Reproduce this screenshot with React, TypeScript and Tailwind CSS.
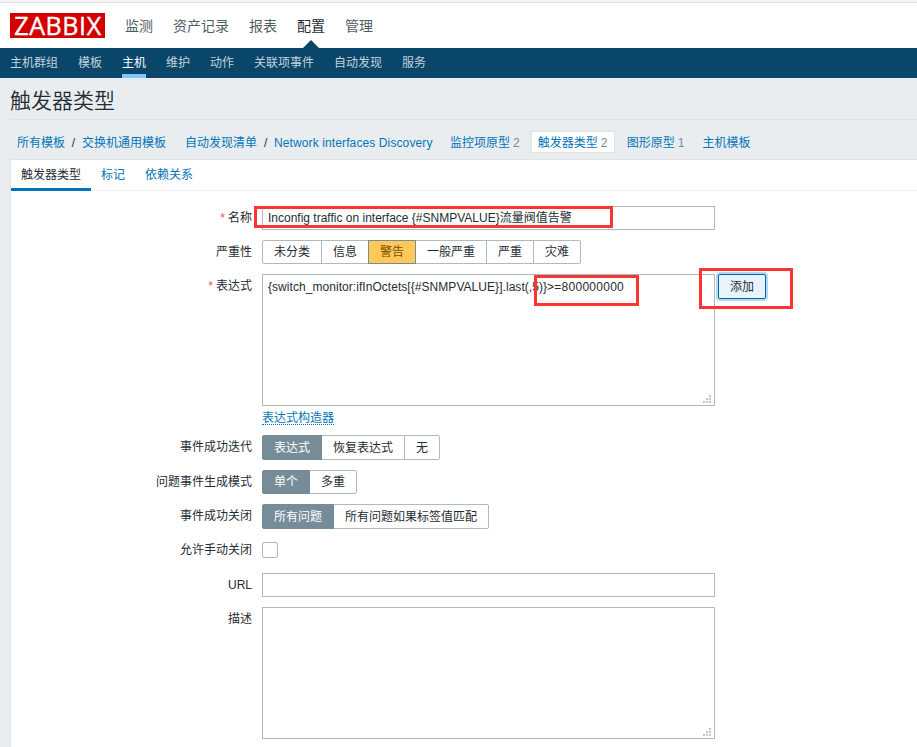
import React, { useState } from 'react';
import { clsx } from 'clsx';

const mainMenu = ['监测', '资产记录', '报表', '配置', '管理'];
const subMenu = ['主机群组', '模板', '主机', '维护', '动作', '关联项事件', '自动发现', '服务'];
const severities = ['未分类', '信息', '警告', '一般严重', '严重', '灾难'];

const FIELD = 'w-[453px] border border-[#acbbc2] bg-white';
const LINK = 'text-[#0275b8]';

function Segmented({
  items,
  initial,
  warn = false,
  tall = false,
}: {
  items: string[];
  initial: number;
  warn?: boolean;
  tall?: boolean;
}) {
  const [active, setActive] = useState(initial);

  return (
    <div className={clsx('flex', tall ? 'h-[25px]' : 'h-6')}>
      {items.map((item, i) => (
        <button
          key={item}
          type="button"
          onClick={() => setActive(i)}
          className={clsx(
            'border px-[11px] leading-[22px]',
            i > 0 && '-ml-px',
            i === 0 && 'rounded-l-[2px]',
            i === items.length - 1 && 'rounded-r-[2px]',
            i !== active && 'border-[#acbbc2] bg-white',
            i === active && 'z-10 border-[#768d99]',
            i === active && (warn ? 'bg-[#ffc859] text-[#734d00]' : 'bg-[#768d99] text-white'),
          )}
        >
          {item}
        </button>
      ))}
    </div>
  );
}

function Row({
  label,
  required = false,
  className,
  children,
}: {
  label: string;
  required?: boolean;
  className?: string;
  children: React.ReactNode;
}) {
  return (
    <div className={clsx('flex items-start', className)}>
      <label className="mr-[10px] w-[241px] shrink-0 text-right leading-6">
        {required && <span className="mr-[3px] text-[#e45959]">*</span>}
        {label}
      </label>
      {children}
    </div>
  );
}

function Grip() {
  return (
    <svg
      className="absolute right-[3px] bottom-[2px]"
      width="8"
      height="8"
      fill="#c4c4c4"
      shapeRendering="crispEdges"
    >
      <path d="M6 0h2v2h-2zM3 3h2v2h-2zM6 3h2v2h-2zM0 6h2v2h-2zM3 6h2v2h-2zM6 6h2v2h-2z" />
    </svg>
  );
}

function Count({ value }: { value: number }) {
  return <span className="ml-[3px] text-[#768d99]">{value}</span>;
}

export default function App() {
  return (
    <div className="flex h-[747px] w-[917px] flex-col overflow-hidden bg-[#e9edf0] font-['Liberation_Sans','Noto_Sans_CJK_SC',sans-serif] text-[12px] leading-[18px] text-[#1f2c33]">
      {/* Header */}
      <header className="flex h-12 shrink-0 items-start border-t-2 border-[#f7f7f7] bg-white">
        <div className="flex h-full w-full items-start border-t border-[#dfdfdf] pl-[10px]">
          <div className="mt-[10px] flex h-[25px] w-[95px] items-center justify-center bg-[#d40000] pl-px font-['Open_Sans',sans-serif] text-[25px] leading-[25px] font-medium tracking-[0.6px] text-white [-webkit-text-stroke:0.4px_white]">
            ZABBIX
          </div>
          <nav className="ml-5 flex h-full gap-5 text-[14px] leading-[20px]">
            {mainMenu.map((item) => (
              <a
                key={item}
                className={clsx(
                  'relative h-full pt-[13px]',
                  item === '配置' ? 'text-[#1f2c33]' : 'text-[#4f5d65]',
                )}
              >
                {item}
                {item === '配置' && (
                  <svg className="absolute bottom-0 left-[6px]" width="16" height="8" fill="#0a466a">
                    <path d="M0 8L8 0L16 8Z" />
                  </svg>
                )}
              </a>
            ))}
          </nav>
        </div>
      </header>

      <nav className="flex h-[30px] shrink-0 gap-5 bg-[#0a466a] pl-[10px] leading-[30px] text-[#c3d2dc]">
        {subMenu.map((item) => (
          <a
            key={item}
            className={clsx('h-full', item === '主机' && 'border-b-4 border-[#7ec8f9] text-white')}
          >
            {item}
          </a>
        ))}
      </nav>

      {/* Title and breadcrumbs */}
      <div className="ml-[10px] h-[42px] shrink-0 border-b border-[#dfe4e7]">
        <h1 className="pt-[7px] text-[21px] leading-8 font-[350]">触发器类型</h1>
      </div>

      <div className="flex h-[39px] shrink-0 items-start pt-3 pl-[17px] leading-[22px]">
        <a className={LINK}>所有模板</a>
        <span className="w-[17px] text-center">/</span>
        <a className={LINK}>交换机通用模板</a>
        <a className={clsx(LINK, 'ml-[19px]')}>自动发现清单</a>
        <span className="w-[17px] text-center">/</span>
        <a className={clsx(LINK, 'w-[159px] tracking-[0.11px] whitespace-nowrap')}>Network interfaces Discovery</a>
        <a className={clsx(LINK, 'ml-[17px]')}>
          监控项原型
          <Count value={2} />
        </a>
        <a
          className={clsx(
            LINK,
            'ml-3 h-5 w-[82px] bg-white pl-[6px] whitespace-nowrap shadow-[0_0_1px_1px_#dfe4e7]',
          )}
        >
          触发器类型
          <Count value={2} />
        </a>
        <a className={clsx(LINK, 'ml-[13px]')}>
          图形原型
          <Count value={1} />
        </a>
        <a className={clsx(LINK, 'ml-[18px]')}>主机模板</a>
      </div>

      {/* Form panel */}
      <main className="relative ml-[10px] flex-1 border-t border-l border-[#dfe4e7] bg-white">
        <nav className="flex h-[31px] border-b border-[#ebeef0] leading-[31px]">
          <a className="h-[31px] border-b-3 border-[#0275b8] px-[10px]">触发器类型</a>
          <a className={clsx(LINK, 'ml-[10px]')}>标记</a>
          <a className={clsx(LINK, 'ml-5')}>依赖关系</a>
        </nav>

        <form className="pt-[15px]">
          <Row label="名称" required>
            <div className={clsx(FIELD, 'h-6 pl-[5px] leading-[22px] whitespace-nowrap')}>
              <span>Inconfig traffic on interface {'{#SNMPVALUE}'}</span>
              流量阀值告警
            </div>
          </Row>

          <Row label="严重性" className="mt-[10px]">
            <Segmented items={severities} initial={2} warn />
          </Row>

          <Row label="表达式" required className="mt-[10px]">
            <div>
              <div className={clsx(FIELD, 'relative h-[132px] pt-[2px] pl-[5px] leading-5 whitespace-nowrap')}>
                <span className="tracking-[0.05px]">
                  {'{switch_monitor:ifInOctets[{#SNMPVALUE}].last(,5)}'}
                </span>
                <span className="tracking-[0.26px]">{'>=800000000'}</span>
                <Grip />
              </div>
              <div className="flex h-[29px] pt-[3px]">
                <a className={clsx(LINK, 'h-4 border-b border-dotted border-[#0275b8] leading-[18px]')}>
                  表达式构造器
                </a>
              </div>
            </div>
            <button
              type="button"
              className="ml-[3px] h-[25px] w-12 rounded-[2px] border border-[#02659f] bg-[#e8f4fd] pt-px leading-[23px] shadow-[0_0_0_2px_#b5d8f3]"
            >
              添加
            </button>
          </Row>

          <Row label="事件成功迭代">
            <Segmented items={['表达式', '恢复表达式', '无']} initial={0} tall />
          </Row>

          <Row label="问题事件生成模式" className="mt-[10px]">
            <Segmented items={['单个', '多重']} initial={0} />
          </Row>

          <Row label="事件成功关闭" className="mt-[10px]">
            <Segmented items={['所有问题', '所有问题如果标签值匹配']} initial={0} tall />
          </Row>

          <Row label="允许手动关闭" className="mt-[9px]">
            <span className="mt-1 h-4 w-4 rounded-[2px] border border-[#acbbc2] bg-white" />
          </Row>

          <Row label="URL" className="mt-[11px]">
            <div className={clsx(FIELD, 'h-6')} />
          </Row>

          <Row label="描述" className="mt-[10px]">
            <div className={clsx(FIELD, 'relative h-[132px]')}>
              <Grip />
            </div>
          </Row>
        </form>

        {/* Highlight marks over the form */}
        <div className="absolute top-[46px] left-[243px] z-20 h-[22px] w-[359px] border-3 border-[#fa3534]" />
        <div className="absolute top-[115px] left-[523px] z-20 h-[31px] w-[105px] border-3 border-[#fa3534]" />
        <div className="absolute top-[108px] left-[688px] z-20 h-[41px] w-[94px] border-3 border-[#fa3534]" />
      </main>
    </div>
  );
}
